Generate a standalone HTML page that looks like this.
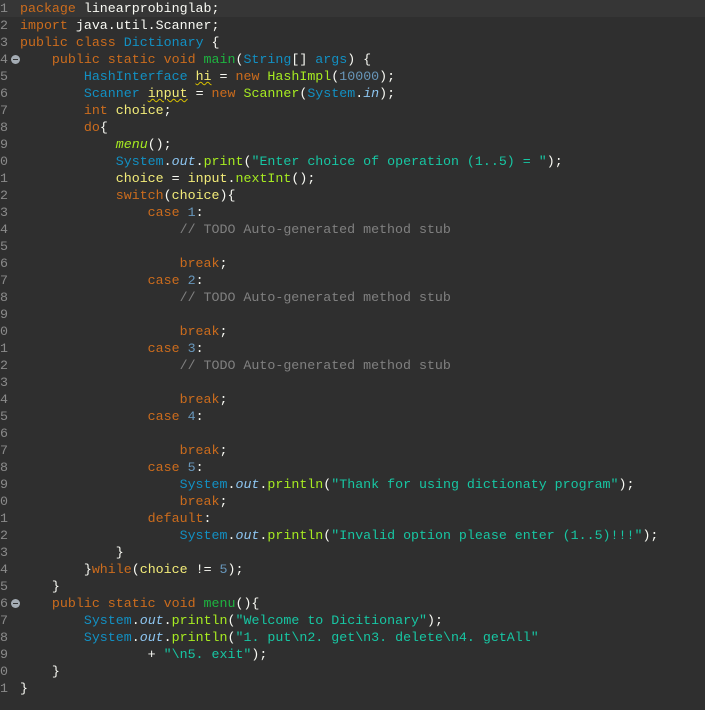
<!DOCTYPE html>
<html><head><meta charset="utf-8"><style>
html,body{margin:0;padding:0;background:#2f2f2f;width:705px;height:710px;overflow:hidden}
.ed{position:relative;font-family:"Liberation Mono",monospace;font-size:13.3px;line-height:17px;color:#f9faf4}
.l{height:17px;position:relative}
.n{position:absolute;left:0;width:11px;overflow:hidden;direction:rtl;text-align:left;color:#8a8a8a}
.c{position:absolute;left:20px;white-space:pre}
.hl{background:#363636}
.k{color:#cc6c1d}.t{color:#1290c3}.m{color:#1eb540}.f{color:#a7ec21}.v{color:#f3ec79}
.s{color:#17c6a3}.o{color:#8dc5f0;font-style:italic}.d{color:#6897bb}.cm{color:#808080}
.i{font-style:italic}
.w{text-decoration:underline wavy #d8c000;text-decoration-thickness:1px}
.fold{position:absolute;left:11px;top:4px;width:9px;height:9px;border-radius:50%;background:#a4acb4}
.fold:after{content:"";position:absolute;left:2px;top:4px;width:5px;height:1px;background:#333}
</style></head><body><div class="ed">
<div class="l hl"><span class="n">1</span><span class="c"><span class="k">package</span> linearprobinglab;</span></div>
<div class="l"><span class="n">2</span><span class="c"><span class="k">import</span> java.util.Scanner;</span></div>
<div class="l"><span class="n">3</span><span class="c"><span class="k">public class</span> <span class="t">Dictionary</span> {</span></div>
<div class="l"><span class="n">4</span><span class="fold"></span><span class="c">    <span class="k">public static void</span> <span class="m">main</span>(<span class="t">String</span>[] <span class="t">args</span>) {</span></div>
<div class="l"><span class="n">5</span><span class="c">        <span class="t">HashInterface</span> <span class="v w">hi</span> = <span class="k">new</span> <span class="f">HashImpl</span>(<span class="d">10000</span>);</span></div>
<div class="l"><span class="n">6</span><span class="c">        <span class="t">Scanner</span> <span class="v w">input</span> = <span class="k">new</span> <span class="f">Scanner</span>(<span class="t">System</span>.<span class="o">in</span>);</span></div>
<div class="l"><span class="n">7</span><span class="c">        <span class="k">int</span> <span class="v">choice</span>;</span></div>
<div class="l"><span class="n">8</span><span class="c">        <span class="k">do</span>{</span></div>
<div class="l"><span class="n">9</span><span class="c">            <span class="f i">menu</span>();</span></div>
<div class="l"><span class="n">0</span><span class="c">            <span class="t">System</span>.<span class="o">out</span>.<span class="f">print</span>(<span class="s">"Enter choice of operation (1..5) = "</span>);</span></div>
<div class="l"><span class="n">1</span><span class="c">            <span class="v">choice</span> = <span class="v">input</span>.<span class="f">nextInt</span>();</span></div>
<div class="l"><span class="n">2</span><span class="c">            <span class="k">switch</span>(<span class="v">choice</span>){</span></div>
<div class="l"><span class="n">3</span><span class="c">                <span class="k">case</span> <span class="d">1</span>:</span></div>
<div class="l"><span class="n">4</span><span class="c">                    <span class="cm">// TODO Auto-generated method stub</span></span></div>
<div class="l"><span class="n">5</span><span class="c"></span></div>
<div class="l"><span class="n">6</span><span class="c">                    <span class="k">break</span>;</span></div>
<div class="l"><span class="n">7</span><span class="c">                <span class="k">case</span> <span class="d">2</span>:</span></div>
<div class="l"><span class="n">8</span><span class="c">                    <span class="cm">// TODO Auto-generated method stub</span></span></div>
<div class="l"><span class="n">9</span><span class="c"></span></div>
<div class="l"><span class="n">0</span><span class="c">                    <span class="k">break</span>;</span></div>
<div class="l"><span class="n">1</span><span class="c">                <span class="k">case</span> <span class="d">3</span>:</span></div>
<div class="l"><span class="n">2</span><span class="c">                    <span class="cm">// TODO Auto-generated method stub</span></span></div>
<div class="l"><span class="n">3</span><span class="c"></span></div>
<div class="l"><span class="n">4</span><span class="c">                    <span class="k">break</span>;</span></div>
<div class="l"><span class="n">5</span><span class="c">                <span class="k">case</span> <span class="d">4</span>:</span></div>
<div class="l"><span class="n">6</span><span class="c"></span></div>
<div class="l"><span class="n">7</span><span class="c">                    <span class="k">break</span>;</span></div>
<div class="l"><span class="n">8</span><span class="c">                <span class="k">case</span> <span class="d">5</span>:</span></div>
<div class="l"><span class="n">9</span><span class="c">                    <span class="t">System</span>.<span class="o">out</span>.<span class="f">println</span>(<span class="s">"Thank for using dictionaty program"</span>);</span></div>
<div class="l"><span class="n">0</span><span class="c">                    <span class="k">break</span>;</span></div>
<div class="l"><span class="n">1</span><span class="c">                <span class="k">default</span>:</span></div>
<div class="l"><span class="n">2</span><span class="c">                    <span class="t">System</span>.<span class="o">out</span>.<span class="f">println</span>(<span class="s">"Invalid option please enter (1..5)!!!"</span>);</span></div>
<div class="l"><span class="n">3</span><span class="c">            }</span></div>
<div class="l"><span class="n">4</span><span class="c">        }<span class="k">while</span>(<span class="v">choice</span> != <span class="d">5</span>);</span></div>
<div class="l"><span class="n">5</span><span class="c">    }</span></div>
<div class="l"><span class="n">6</span><span class="fold"></span><span class="c">    <span class="k">public static void</span> <span class="m">menu</span>(){</span></div>
<div class="l"><span class="n">7</span><span class="c">        <span class="t">System</span>.<span class="o">out</span>.<span class="f">println</span>(<span class="s">"Welcome to Dicitionary"</span>);</span></div>
<div class="l"><span class="n">8</span><span class="c">        <span class="t">System</span>.<span class="o">out</span>.<span class="f">println</span>(<span class="s">"1. put\n2. get\n3. delete\n4. getAll"</span></span></div>
<div class="l"><span class="n">9</span><span class="c">                + <span class="s">"\n5. exit"</span>);</span></div>
<div class="l"><span class="n">0</span><span class="c">    }</span></div>
<div class="l"><span class="n">1</span><span class="c">}</span></div>
</div></body></html>
